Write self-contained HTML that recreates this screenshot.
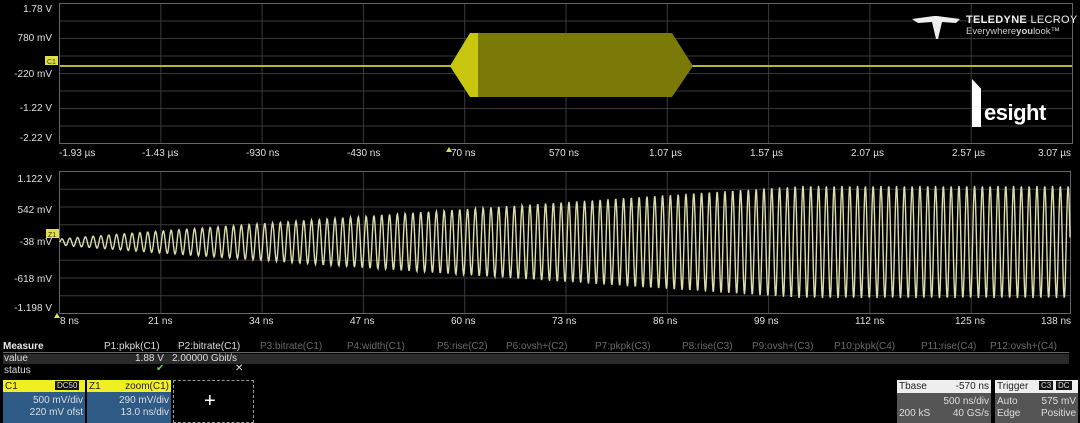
<!DOCTYPE html>
<html><head><meta charset="utf-8">
<style>
*{margin:0;padding:0;box-sizing:border-box}
body{width:1080px;height:423px;background:#000;overflow:hidden;position:relative;font-family:"Liberation Sans",sans-serif;color:#ddd;font-size:10px}
.a{position:absolute;white-space:nowrap}
.yl{right:1028px;text-align:right;font-size:10px;color:#e0e0e0}
.xl{font-size:10px;color:#e0e0e0}
.dim{color:#6a6a6a}
</style></head><body>
<svg class="a" style="left:0;top:0" width="1080" height="340" id="sv">
<g stroke="#3a3a3a" stroke-width="1" id="grid"></g>
<rect x="59.5" y="3.5" width="1013" height="140" fill="none" stroke="#666"/>
<rect x="59.5" y="171.5" width="1011" height="142" fill="none" stroke="#666"/>
<line x1="60" y1="66" x2="1072" y2="66" stroke="#b8b838" stroke-width="2"/>
<polygon points="450,66 470,33 672,33 693,66 672,97 470,97" fill="#7b7a08"/>
<polygon points="450,66 470,33 478,33 478,97 470,97" fill="#c9c610"/>
<path id="wave" fill="none" stroke="#dcdcac" stroke-width="1.4" d=""/>
<rect x="45" y="56" width="13" height="9" fill="#e0e040"/>
<text x="47" y="64" font-size="7" fill="#333">C1</text>
<rect x="46" y="229" width="13" height="9" fill="#e0e040"/>
<text x="48" y="237" font-size="7" fill="#333">Z1</text>
<polygon points="446,152 452,152 449,147" fill="#e0e060"/>
<polygon points="54,318 60,318 57,313" fill="#e0e060"/>
</svg>
<div class="a yl" style="top:4px">1.78 V</div>
<div class="a yl" style="top:33px">780 mV</div>
<div class="a yl" style="top:69px">-220 mV</div>
<div class="a yl" style="top:103px">-1.22 V</div>
<div class="a yl" style="top:133px">-2.22 V</div>
<div class="a xl" style="top:148px;left:59px">-1.93 µs</div>
<div class="a xl" style="top:148px;left:142px">-1.43 µs</div>
<div class="a xl" style="top:148px;left:246px">-930 ns</div>
<div class="a xl" style="top:148px;left:347px">-430 ns</div>
<div class="a xl" style="top:148px;left:451px">70 ns</div>
<div class="a xl" style="top:148px;left:549px">570 ns</div>
<div class="a xl" style="top:148px;left:649px">1.07 µs</div>
<div class="a xl" style="top:148px;left:750px">1.57 µs</div>
<div class="a xl" style="top:148px;left:851px">2.07 µs</div>
<div class="a xl" style="top:148px;left:952px">2.57 µs</div>
<div class="a xl" style="top:148px;left:1038px">3.07 µs</div>
<div class="a yl" style="top:174px">1.122 V</div>
<div class="a yl" style="top:205px">542 mV</div>
<div class="a yl" style="top:237px">-38 mV</div>
<div class="a yl" style="top:274px">-618 mV</div>
<div class="a yl" style="top:303px">-1.198 V</div>
<div class="a xl" style="top:316px;left:60px">8 ns</div>
<div class="a xl" style="top:316px;left:148px">21 ns</div>
<div class="a xl" style="top:316px;left:249px">34 ns</div>
<div class="a xl" style="top:316px;left:350px">47 ns</div>
<div class="a xl" style="top:316px;left:451px">60 ns</div>
<div class="a xl" style="top:316px;left:552px">73 ns</div>
<div class="a xl" style="top:316px;left:653px">86 ns</div>
<div class="a xl" style="top:316px;left:754px">99 ns</div>
<div class="a xl" style="top:316px;left:855px">112 ns</div>
<div class="a xl" style="top:316px;left:955px">125 ns</div>
<div class="a xl" style="top:316px;left:1041px">138 ns</div>
<!-- logos -->
<svg class="a" style="left:912px;top:15px" width="50" height="26"><polygon points="0,4 22,1 25,1 48,4 44,8 30,7 26,24 24,24 20,7 6,8" fill="#eee"/></svg>
<div class="a" style="left:966px;top:14px;font-size:11px;font-weight:bold;color:#eee;letter-spacing:0.3px">TELEDYNE <span style="font-weight:normal">LECROY</span></div>
<div class="a" style="left:966px;top:26px;font-size:9.5px;color:#ccc">Everywhere<b>you</b>look™</div>
<div class="a" style="left:972px;top:79px;width:9px;height:48px;background:#fff;clip-path:polygon(0 0,100% 20%,100% 100%,0 100%)"></div>
<div class="a" style="left:984px;top:100px;font-size:22px;font-weight:bold;color:#fff;letter-spacing:-0.5px">esight</div>
<!-- measure -->
<div class="a" style="left:3px;top:342px;width:1066px;height:11px;border-bottom:1px solid #666"></div>
<div class="a" style="left:3px;top:341px;font-weight:bold;color:#e8e8e8">Measure</div>
<div class="a" style="left:104px;top:341px">P1:pkpk(C1)</div>
<div class="a" style="left:178px;top:341px">P2:bitrate(C1)</div>
<div class="a dim" style="left:260px;top:341px">P3:bitrate(C1)</div>
<div class="a dim" style="left:347px;top:341px">P4:width(C1)</div>
<div class="a dim" style="left:437px;top:341px">P5:rise(C2)</div>
<div class="a dim" style="left:506px;top:341px">P6:ovsh+(C2)</div>
<div class="a dim" style="left:595px;top:341px">P7:pkpk(C3)</div>
<div class="a dim" style="left:682px;top:341px">P8:rise(C3)</div>
<div class="a dim" style="left:752px;top:341px">P9:ovsh+(C3)</div>
<div class="a dim" style="left:834px;top:341px">P10:pkpk(C4)</div>
<div class="a dim" style="left:921px;top:341px">P11:rise(C4)</div>
<div class="a dim" style="left:990px;top:341px">P12:ovsh+(C4)</div>
<div class="a" style="left:3px;top:354px;width:1066px;height:10px;background:#2a2a2a"></div>
<div class="a" style="left:4px;top:353px">value</div>
<div class="a" style="left:135px;top:353px">1.88 V</div>
<div class="a" style="left:172px;top:353px">2.00000 Gbit/s</div>
<div class="a" style="left:4px;top:365px">status</div>
<div class="a" style="left:156px;top:363px;color:#6c6">✔</div>
<div class="a" style="left:235px;top:363px">✕</div>
<!-- C1 -->
<div class="a" style="left:3px;top:380px;width:82px;height:43px;background:#2e5a86"></div>
<div class="a" style="left:3px;top:380px;width:82px;height:12px;background:#f0f020"></div>
<div class="a" style="left:5px;top:381px;color:#222">C1</div>
<div class="a" style="left:55px;top:381px;background:#111;color:#ddd;font-size:8px;padding:0 2px">DC50</div>
<div class="a" style="left:3px;top:395px;width:80px;text-align:right">500 mV/div</div>
<div class="a" style="left:3px;top:407px;width:80px;text-align:right">220 mV ofst</div>
<div class="a" style="left:87px;top:380px;width:84px;height:43px;background:#2e5a86"></div>
<div class="a" style="left:87px;top:380px;width:84px;height:12px;background:#f0f020"></div>
<div class="a" style="left:89px;top:381px;color:#222">Z1</div>
<div class="a" style="left:87px;top:381px;width:82px;text-align:right;color:#222">zoom(C1)</div>
<div class="a" style="left:87px;top:395px;width:82px;text-align:right">290 mV/div</div>
<div class="a" style="left:87px;top:407px;width:82px;text-align:right">13.0 ns/div</div>
<div class="a" style="left:173px;top:380px;width:81px;height:43px;border:1px dashed #999"></div>
<div class="a" style="left:204px;top:390px;font-size:20px;color:#fff">+</div>
<!-- Tbase -->
<div class="a" style="left:897px;top:380px;width:94px;height:43px;background:#555"></div>
<div class="a" style="left:897px;top:380px;width:94px;height:13px;background:#eee"></div>
<div class="a" style="left:899px;top:381px;color:#222">Tbase</div>
<div class="a" style="left:897px;top:381px;width:92px;text-align:right;color:#222">-570 ns</div>
<div class="a" style="left:897px;top:396px;width:92px;text-align:right">500 ns/div</div>
<div class="a" style="left:899px;top:408px">200 kS</div>
<div class="a" style="left:897px;top:408px;width:92px;text-align:right">40 GS/s</div>
<div class="a" style="left:995px;top:380px;width:83px;height:43px;background:#555"></div>
<div class="a" style="left:995px;top:380px;width:83px;height:13px;background:#eee"></div>
<div class="a" style="left:997px;top:381px;color:#222">Trigger</div>
<div class="a" style="left:1039px;top:381px;background:#111;color:#ddd;font-size:8px;padding:0 2px">C3</div>
<div class="a" style="left:1056px;top:381px;background:#111;color:#ddd;font-size:8px;padding:0 2px">DC</div>
<div class="a" style="left:997px;top:396px">Auto</div>
<div class="a" style="left:995px;top:396px;width:81px;text-align:right">575 mV</div>
<div class="a" style="left:997px;top:408px">Edge</div>
<div class="a" style="left:995px;top:408px;width:81px;text-align:right">Positive</div>
<script>
(function(){
var g=document.getElementById('grid'),s='';
for(var i=1;i<10;i++){var x=59.5+i*101.3;s+='<line x1="'+x+'" y1="4" x2="'+x+'" y2="143"/><line x1="'+x+'" y1="172" x2="'+x+'" y2="313"/>';}
for(var j=1;j<8;j++){var y=3.5+j*17.5;s+='<line x1="60" y1="'+y+'" x2="1072" y2="'+y+'"/>';var y2=171.5+j*17.75;s+='<line x1="60" y1="'+y2+'" x2="1070" y2="'+y2+'"/>';}
g.innerHTML=s;
var d='M60 242';
for(var x=60;x<=1070;x+=0.5){var t=(x-60)/740;if(t>1)t=1;var a=3+53*Math.pow(t,0.95);var y=242-a*Math.sin((x-60)/7.8*2*Math.PI);d+=' L'+x+' '+y.toFixed(1);}
document.getElementById('wave').setAttribute('d',d);
})();
</script>
</body></html>
